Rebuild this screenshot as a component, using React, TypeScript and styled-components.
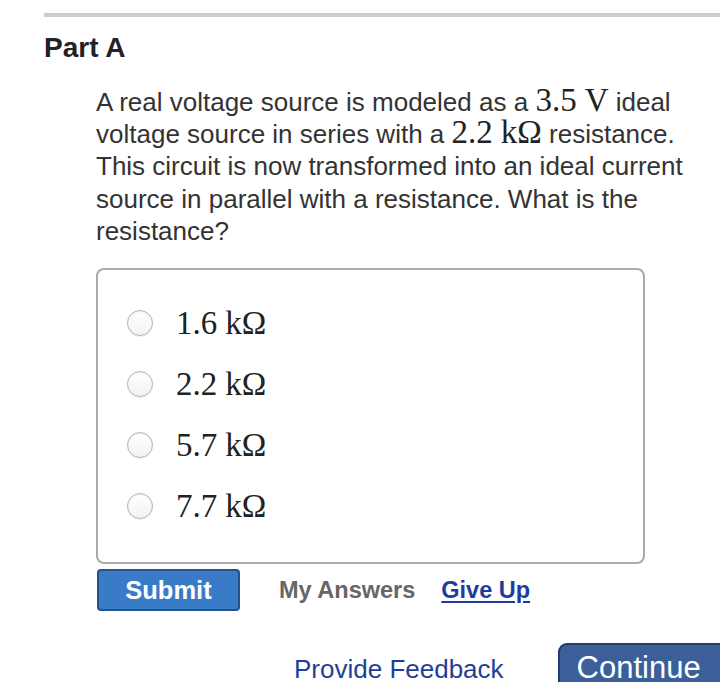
import { FC } from 'react';
import styled, { createGlobalStyle } from 'styled-components';

const GlobalStyle = createGlobalStyle`
  html, body {
    margin: 0;
    padding: 0;
    background: #fff;
    overflow: hidden;
  }
  body {
    font-family: 'Liberation Sans', Arial, sans-serif;
    color: #333;
  }
`;

const OPTIONS = ['1.6', '2.2', '5.7', '7.7'];

const Math: FC<{ value: string; unit: string; inline?: boolean }> = ({
  value,
  unit,
  inline,
}) => (
  <MathText $inline={inline}>
    {value}
    <Unit>{unit}</Unit>
  </MathText>
);

const App = () => {
  return (
    <Page>
      <GlobalStyle />
      <Rule />
      <Title>Part A</Title>
      <Section>
        <Question>
          A real voltage source is modeled as a{' '}
          <Math inline value='3.5' unit='V' /> ideal voltage source in series
          with a <Math inline value='2.2' unit='kΩ' /> resistance. This circuit
          is now transformed into an ideal current source in parallel with a
          resistance. What is the resistance?
        </Question>
        <ChoiceBox>
          {OPTIONS.map((opt) => (
            <Choice key={opt}>
              <Radio />
              <ChoiceLabel>
                <Math value={opt} unit='kΩ' />
              </ChoiceLabel>
            </Choice>
          ))}
        </ChoiceBox>
        <Actions>
          <SubmitButton>Submit</SubmitButton>
          <MutedAction>My Answers</MutedAction>
          <LinkAction>Give Up</LinkAction>
        </Actions>
      </Section>
      <Footer>
        <FeedbackLink>Provide Feedback</FeedbackLink>
        <ContinueButton>Continue</ContinueButton>
      </Footer>
    </Page>
  );
};

export default App;

/** STYLES */

const Page = styled.div`
  padding-left: 44px;
  width: 760px;
  height: 682px;
  overflow: hidden;
`;

const Rule = styled.div`
  height: 4px;
  margin-top: 13px;
  background: #cccccc;
`;

const Title = styled.h2`
  margin: 15px 0 0 0;
  font-size: 28px;
  line-height: 32px;
  font-weight: bold;
  color: #222;
`;

const Section = styled.div`
  padding-left: 52px;
`;

const Question = styled.p`
  margin: 22px 0 0 0;
  width: 610px;
  font-size: 26px;
  line-height: 32.2px;
  color: #333;
`;

const MathText = styled.span<{ $inline?: boolean }>`
  font-family: 'Liberation Serif', 'Times New Roman', serif;
  font-size: 33px;
  line-height: ${(p) => (p.$inline ? '0' : '32px')};
  color: #222;
`;

const Unit = styled.span`
  margin-left: 8px;
`;

const ChoiceBox = styled.div`
  box-sizing: border-box;
  margin-top: 21px;
  width: 549px;
  border: 2px solid #aaaaaa;
  border-radius: 8px;
  padding: 22px 0 26px 29px;
`;

const Choice = styled.label`
  display: flex;
  align-items: center;
  height: 61px;
  gap: 23px;
`;

const Radio = styled.span`
  box-sizing: border-box;
  width: 26px;
  height: 26px;
  border-radius: 50%;
  border: 1px solid #b4b4b4;
  background: linear-gradient(#ffffff, #f3f3f3);
  box-shadow: inset 0 1px 1px rgba(0, 0, 0, 0.08), 0 1px 0 rgba(0, 0, 0, 0.06);
`;

const ChoiceLabel = styled.span`
  display: flex;
  align-items: center;
`;

const Actions = styled.div`
  display: flex;
  align-items: center;
  margin-top: 5px;
`;

const SubmitButton = styled.button`
  box-sizing: border-box;
  width: 143px;
  height: 42px;
  margin-left: 1px;
  border: 2px solid #24528c;
  border-radius: 4px;
  background: #3a7bc8;
  color: #fff;
  font-family: 'Liberation Sans', Arial, sans-serif;
  font-size: 25.5px;
  font-weight: bold;
  padding: 0;
`;

const MutedAction = styled.span`
  margin-left: 39px;
  font-size: 23.5px;
  font-weight: bold;
  color: #666;
`;

const LinkAction = styled.a`
  margin-left: 26px;
  font-size: 23.5px;
  font-weight: bold;
  color: #1d3c9b;
  text-decoration: underline;
  text-underline-offset: 3px;
  text-decoration-thickness: 2px;
`;

const Footer = styled.div`
  display: flex;
  align-items: center;
  gap: 54px;
  margin-top: 32px;
  padding-left: 250px;
`;

const FeedbackLink = styled.a`
  font-size: 26px;
  color: #1f3f96;
  margin-top: 2px;
`;

const ContinueButton = styled.button`
  box-sizing: border-box;
  width: 170px;
  height: 50px;
  border: 2px solid #1e3c6e;
  border-radius: 9px;
  background: #3b5f98;
  color: #fff;
  font-family: 'Liberation Sans', Arial, sans-serif;
  font-size: 31px;
  padding: 0 0 0 17px;
  text-align: left;
`;
